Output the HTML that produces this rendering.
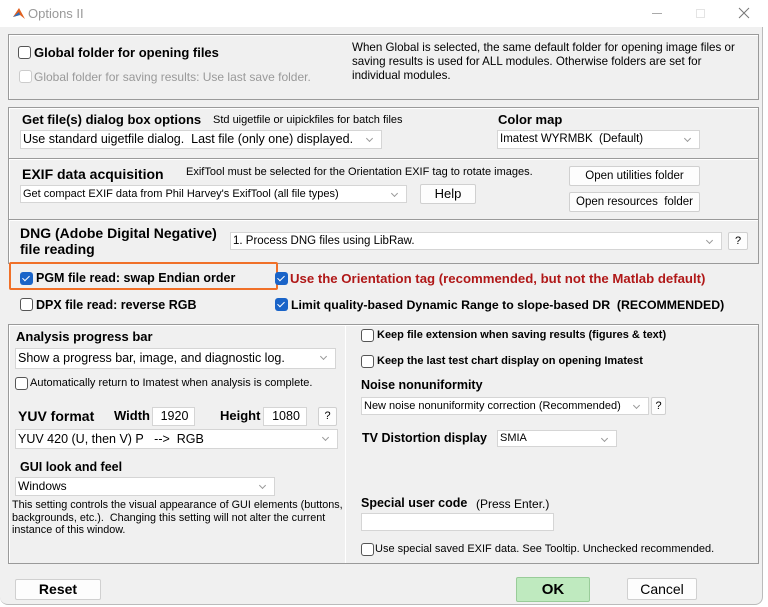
<!DOCTYPE html><html><head><style>
*{box-sizing:border-box;margin:0;padding:0}
body{width:768px;height:607px;background:#fff;font-family:"Liberation Sans",Arial,sans-serif;position:relative;overflow:hidden;color:#000}
.a{position:absolute;white-space:nowrap}
.win{position:absolute;left:0;top:27px;width:763px;height:578px;background:#f0f0f0;border-right:1px solid #bbb;border-bottom:1px solid #bbb;border-radius:0 0 8px 8px}
.p{position:absolute;border:1px solid #9a9a9a;box-shadow:inset 1px 1px 0 #fff}
.b{font-weight:bold}
.dd{position:absolute;background:#fff;border:1px solid #d5d5d5;font-size:12px;padding-left:2px;line-height:17px;white-space:nowrap;overflow:hidden}
.dd:after{content:"";position:absolute;right:9px;top:5px;width:4px;height:4px;border-right:1px solid #999;border-bottom:1px solid #999;transform:rotate(45deg)}
.dd.nc:after{display:none}
.btn{position:absolute;background:#fdfdfd;border:1px solid #d0d0d0;border-radius:2px;text-align:center;white-space:nowrap}
.cb{position:absolute;width:13px;height:13px;border:1px solid #555;border-radius:3px;background:#fff}
.cc{position:absolute;width:13px;height:13px;border-radius:3px;background:#1a64c8}
.cc:after{content:"";position:absolute;left:4px;top:2px;width:3px;height:6px;border-right:1.5px solid #fff;border-bottom:1.5px solid #fff;transform:rotate(45deg)}
</style></head><body>
<div class="a" style="left:12px;top:7px;width:14px;height:13px"><svg width="14" height="13"><polygon points="1,10 7,1 13,12 8,8" fill="#e06020"/><polygon points="1,10 7,5 8,8" fill="#2a70c0"/></svg></div>
<div class="a" style="left:28px;top:6px;font-size:13px;color:#999">Options II</div>
<div class="a" style="left:652px;top:13px;width:10px;height:1px;background:#aaa"></div>
<div class="a" style="left:696px;top:9px;width:9px;height:9px;border:1px solid #e4e4e4"></div>
<svg class="a" style="left:738px;top:7px" width="12" height="12"><path d="M1 1L11 11M11 1L1 11" stroke="#777" stroke-width="1"/></svg>
<div class="win"></div>

<div class="p" style="left:8px;top:34px;width:751px;height:66px"></div>
<div class="cb" style="left:18px;top:46px"></div>
<div class="a b" style="left:34px;top:45px;font-size:13px">Global folder for opening files</div>
<div class="cb" style="left:19px;top:70px;border-color:#ccc"></div>
<div class="a" style="left:34px;top:70px;font-size:12px;color:#999">Global folder for saving results: Use last save folder.</div>
<div class="a" style="left:352px;top:41px;font-size:11.6px;line-height:14px">When Global is selected, the same default folder for opening image files or<br>saving results is used for ALL modules. Otherwise folders are set for<br>individual modules.</div>

<div class="p" style="left:8px;top:107px;width:751px;height:52px"></div>
<div class="a b" style="left:22px;top:112px;font-size:13px">Get file(s) dialog box options</div>
<div class="a" style="left:213px;top:114px;font-size:11px">Std uigetfile or uipickfiles for batch files</div>
<div class="dd" style="left:20px;top:130px;width:362px;height:19px;font-size:12.5px">Use standard uigetfile dialog.&nbsp; Last file (only one) displayed.</div>
<div class="a b" style="left:498px;top:112px;font-size:13px">Color map</div>
<div class="dd" style="left:497px;top:130px;width:203px;height:19px;font-size:11.5px">Imatest WYRMBK&nbsp; (Default)</div>

<div class="p" style="left:8px;top:158px;width:751px;height:62px"></div>
<div class="a b" style="left:22px;top:166px;font-size:14px">EXIF data acquisition</div>
<div class="a" style="left:186px;top:166px;font-size:11px">ExifTool must be selected for the Orientation EXIF tag to rotate images.</div>
<div class="dd" style="left:20px;top:185px;width:387px;height:18px;font-size:11px">Get compact EXIF data from Phil Harvey's ExifTool (all file types)</div>
<div class="btn" style="left:420px;top:184px;width:56px;height:20px;font-size:13px;line-height:18px">Help</div>
<div class="btn" style="left:569px;top:166px;width:131px;height:20px;font-size:11.5px;line-height:18px">Open utilities folder</div>
<div class="btn" style="left:569px;top:192px;width:131px;height:20px;font-size:11.5px;line-height:18px">Open resources&nbsp; folder</div>

<div class="p" style="left:8px;top:219px;width:751px;height:45px"></div>
<div class="a b" style="left:20px;top:225px;font-size:14px;line-height:16px">DNG (Adobe Digital Negative)<br>file reading</div>
<div class="dd" style="left:230px;top:232px;width:492px;height:18px;font-size:11.5px">1. Process DNG files using LibRaw.</div>
<div class="btn" style="left:728px;top:232px;width:20px;height:18px;font-size:11px;line-height:16px">?</div>

<div class="a" style="left:9px;top:262px;width:269px;height:28px;border:2px solid #f07028;border-radius:2px"></div>
<div class="cc" style="left:20px;top:272px"></div>
<div class="a b" style="left:36px;top:271px;font-size:12.5px">PGM file read: swap Endian order</div>
<div class="cb" style="left:20px;top:298px"></div>
<div class="a b" style="left:36px;top:298px;font-size:12.5px">DPX file read: reverse RGB</div>
<div class="cc" style="left:275px;top:272px"></div>
<div class="a b" style="left:290px;top:271px;font-size:13.2px;color:#b01818">Use the Orientation tag (recommended, but not the Matlab default)</div>
<div class="cc" style="left:275px;top:298px"></div>
<div class="a b" style="left:291px;top:298px;font-size:12.3px">Limit quality-based Dynamic Range to slope-based DR&nbsp; (RECOMMENDED)</div>

<div class="p" style="left:8px;top:324px;width:338px;height:240px"></div>
<div class="p" style="left:345px;top:324px;width:414px;height:240px;border-left:none"></div>
<div class="a b" style="left:16px;top:329px;font-size:13px">Analysis progress bar</div>
<div class="dd" style="left:15px;top:348px;width:321px;height:21px;font-size:12.5px;line-height:19px">Show a progress bar, image, and diagnostic log.</div>
<div class="cb" style="left:15px;top:377px"></div>
<div class="a" style="left:30px;top:377px;font-size:11px">Automatically return to Imatest when analysis is complete.</div>
<div class="a b" style="left:18px;top:408px;font-size:14px">YUV format</div>
<div class="a b" style="left:114px;top:408px;font-size:13px">Width</div>
<div class="dd nc" style="left:152px;top:407px;width:43px;height:19px;font-size:12.5px;text-align:center">1920</div>
<div class="a b" style="left:220px;top:408px;font-size:13px">Height</div>
<div class="dd nc" style="left:263px;top:407px;width:44px;height:19px;font-size:12.5px;text-align:center">1080</div>
<div class="btn" style="left:318px;top:407px;width:19px;height:19px;font-size:11px;line-height:17px">?</div>
<div class="dd" style="left:15px;top:429px;width:323px;height:20px;font-size:12.5px;line-height:18px">YUV 420 (U, then V) P&nbsp;&nbsp; --&gt;&nbsp; RGB</div>
<div class="a b" style="left:20px;top:460px;font-size:12.5px">GUI look and feel</div>
<div class="dd" style="left:15px;top:477px;width:260px;height:19px;font-size:12px">Windows</div>
<div class="a" style="left:12px;top:499px;font-size:10.8px;line-height:12.5px">This setting controls the visual appearance of GUI elements (buttons,<br>backgrounds, etc.).&nbsp; Changing this setting will not alter the current<br>instance of this window.</div>

<div class="cb" style="left:361px;top:329px"></div>
<div class="a b" style="left:377px;top:329px;font-size:11px">Keep file extension when saving results (figures &amp; text)</div>
<div class="cb" style="left:361px;top:355px"></div>
<div class="a b" style="left:377px;top:355px;font-size:11px">Keep the last test chart display on opening Imatest</div>
<div class="a b" style="left:361px;top:378px;font-size:12.5px">Noise nonuniformity</div>
<div class="dd" style="left:361px;top:397px;width:288px;height:18px;font-size:11px">New noise nonuniformity correction (Recommended)</div>
<div class="btn" style="left:651px;top:397px;width:15px;height:18px;font-size:11px;line-height:16px">?</div>
<div class="a b" style="left:362px;top:431px;font-size:12.5px">TV Distortion display</div>
<div class="dd" style="left:497px;top:430px;width:120px;height:17px;font-size:11px;line-height:15px">SMIA</div>
<div class="a b" style="left:361px;top:496px;font-size:12.5px">Special user code</div>
<div class="a" style="left:476px;top:497px;font-size:12px">(Press Enter.)</div>
<div class="dd nc" style="left:361px;top:513px;width:193px;height:18px"></div>
<div class="cb" style="left:361px;top:543px"></div>
<div class="a" style="left:375px;top:543px;font-size:11px">Use special saved EXIF data. See Tooltip. Unchecked recommended.</div>

<div class="btn" style="left:15px;top:579px;width:86px;height:21px;font-size:14px;line-height:19px;font-weight:bold">Reset</div>
<div class="btn" style="left:516px;top:577px;width:74px;height:25px;font-size:15px;line-height:23px;font-weight:bold;background:#bfeabf;border-color:#9c9">OK</div>
<div class="btn" style="left:627px;top:578px;width:70px;height:22px;font-size:14px;line-height:20px">Cancel</div>
</body></html>
